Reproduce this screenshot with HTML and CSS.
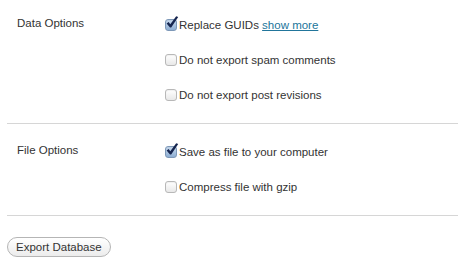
FILE: index.html
```html
<!DOCTYPE html>
<html>
<head>
<meta charset="utf-8">
<link rel="stylesheet" href="styles.css">
</head>
<body>
<div class="page">
  <div class="section first">
    <div class="label">Data Options</div>
    <div class="options">
      <div class="row">
        <span class="cb checked"><svg class="tick" viewBox="0 0 14 14" width="14" height="14"><path d="M1.6 7.4 L5.0 11.6 L6.2 11.6 L13.2 1.0 L11.2 0.2 L5.3 8.2 L3.6 6.0 Z" fill="#16254f"/></svg></span>
        <span class="text">Replace GUIDs <a class="link" href="#">show more</a></span>
      </div>
      <div class="row">
        <span class="cb"></span>
        <span class="text">Do not export spam comments</span>
      </div>
      <div class="row">
        <span class="cb"></span>
        <span class="text">Do not export post revisions</span>
      </div>
    </div>
  </div>
  <div class="section">
    <div class="label">File Options</div>
    <div class="options">
      <div class="row">
        <span class="cb checked"><svg class="tick" viewBox="0 0 14 14" width="14" height="14"><path d="M1.6 7.4 L5.0 11.6 L6.2 11.6 L13.2 1.0 L11.2 0.2 L5.3 8.2 L3.6 6.0 Z" fill="#16254f"/></svg></span>
        <span class="text">Save as file to your computer</span>
      </div>
      <div class="row">
        <span class="cb"></span>
        <span class="text">Compress file with gzip</span>
      </div>
    </div>
  </div>
  <div class="actions">
    <button class="btn">Export Database</button>
  </div>
</div>
</body>
</html>
```

FILE: styles.css
```css
html, body {
  margin: 0;
  padding: 0;
  background: #ffffff;
}
body {
  font-family: "Liberation Sans", Arial, Helvetica, sans-serif;
  font-size: 11.5px;
  color: #333333;
}
.page {
  margin-left: 7px;
  width: 451px;
}
.section {
  display: flex;
  padding: 10px 0 11px;
  border-bottom: 1px solid #d6d6d6;
}
.section.first {
  padding-top: 7px;
}
.label {
  width: 148px;
  padding-left: 10px;
  line-height: 33px;
}
.options {
  display: flex;
  flex-direction: column;
}
.row {
  height: 35px;
  display: flex;
  align-items: center;
  gap: 2px;
}
.cb {
  position: relative;
  width: 10px;
  height: 10px;
  border: 1px solid #b8b8b8;
  border-radius: 3px;
  background: linear-gradient(#ffffff, #e8e8e8);
  box-shadow: inset 0 1px 1px rgba(0,0,0,0.06);
  flex: none;
}
.cb.checked {
  border-color: #7d98b8;
  background: linear-gradient(#c9dbf0, #8eaed3);
}
.tick {
  position: absolute;
  left: -1px;
  top: -4px;
}
.text {
  white-space: nowrap;
}
.link {
  color: #21759b;
  text-decoration: underline;
}
.actions {
  padding-top: 21px;
}
.btn {
  font-family: "Liberation Sans", Arial, Helvetica, sans-serif;
  font-size: 11.5px;
  color: #333333;
  height: 20px;
  padding: 0 8px;
  border: 1px solid #b5b5b5;
  border-radius: 11px;
  background: linear-gradient(#ffffff, #ececec);
  line-height: 18px;
}
```
